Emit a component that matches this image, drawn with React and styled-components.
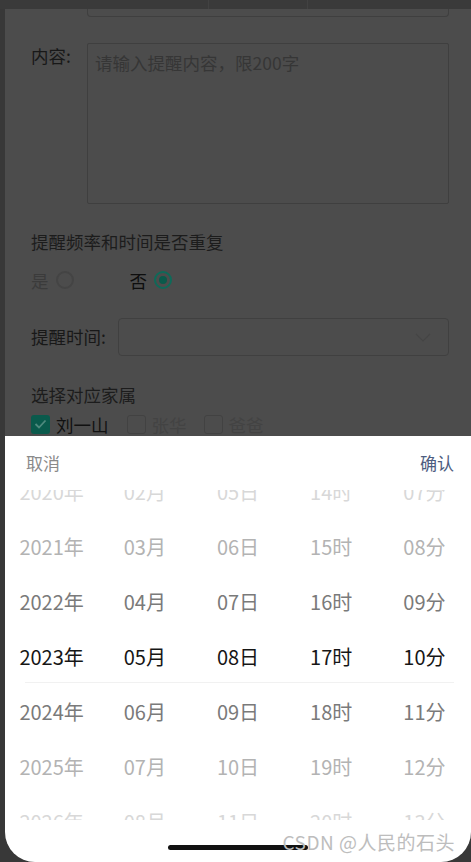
import React from "react";
import styled, { createGlobalStyle } from "styled-components";

const Global = createGlobalStyle`
  html, body { margin: 0; padding: 0; background: #353535; }
  body { font-family: "Noto Sans CJK SC", "Noto Sans", sans-serif; }
  * { box-sizing: border-box; }
`;

const Frame = styled.div`
  width: 471px;
  height: 862px;
  display: flex;
  flex-direction: column;
  background: #383838;
  overflow: hidden;
`;

const StatusStrip = styled.div`
  height: 9px;
  flex: none;
  display: flex;
  background: #3a3a3a;
`;

const StripCell = styled.div`
  width: ${(p) => (p.$w ? `${p.$w}px` : "auto")};
  flex: ${(p) => (p.$w ? "none" : 1)};
  border-left: ${(p) => (p.$edge ? "1px solid #424242" : "none")};
`;

const Screen = styled.div`
  position: relative;
  flex: 1;
  margin-left: 5px;
  background: #4c4c4c;
  border-bottom-left-radius: 30px;
  border-bottom-right-radius: 30px;
  overflow: hidden;
`;

const Form = styled.div`
  display: flex;
  flex-direction: column;
  padding: 0 22px 0 26px;
  color: #1e1e1e;
  font-size: 17.5px;
`;

const InputStub = styled.div`
  margin-left: 56px;
  height: 8px;
  border: 1px solid #3f3f3f;
  border-top: none;
  border-radius: 0 0 4px 4px;
`;

const FieldRow = styled.div`
  display: flex;
  align-items: ${(p) => (p.$center ? "center" : "flex-start")};
  margin-top: ${(p) => p.$mt}px;
`;

const Label = styled.div`
  width: ${(p) => p.$w}px;
  flex: none;
  line-height: ${(p) => p.$lh}px;
  color: #181818;
  white-space: nowrap;
`;

const TextBox = styled.div`
  flex: 1;
  height: 161px;
  border: 1px solid #3f3f3f;
  border-radius: 2px;
  padding: 6px 7px;
  line-height: 26px;
  color: #363636;
`;

const SectionTitle = styled.div`
  margin-top: ${(p) => p.$mt}px;
  line-height: 24px;
  color: #1c1c1c;
`;

const ChoiceRow = styled.div`
  display: flex;
  align-items: center;
  height: 24px;
  margin-top: ${(p) => p.$mt}px;
`;

const RadioItem = styled.div`
  display: flex;
  align-items: center;
  gap: 7px;
  margin-right: ${(p) => p.$mr || 0}px;
  color: ${(p) => (p.$on ? "#0e0e0e" : "#3b3b3b")};
`;

const RadioDot = styled.span`
  width: 18px;
  height: 18px;
  border-radius: 50%;
  border: 2px solid ${(p) => (p.$on ? "#0e6a59" : "#444444")};
  display: flex;
  align-items: center;
  justify-content: center;
  &::after {
    content: "";
    width: 8px;
    height: 8px;
    border-radius: 50%;
    background: ${(p) => (p.$on ? "#0a5a4b" : "transparent")};
  }
`;

const SelectBox = styled.div`
  flex: 1;
  height: 38px;
  border: 1px solid #404040;
  border-radius: 4px;
  display: flex;
  align-items: center;
  justify-content: flex-end;
  padding-right: 17px;
`;

const CheckItem = styled.div`
  display: flex;
  align-items: center;
  gap: 6px;
  margin-left: ${(p) => p.$ml || 0}px;
  color: ${(p) => (p.$on ? "#111111" : "#434343")};
`;

const CheckBox = styled.span`
  width: 19px;
  height: 19px;
  border-radius: 3px;
  display: flex;
  align-items: center;
  justify-content: center;
  background: ${(p) => (p.$on ? "#0a5a4c" : "transparent")};
  border: ${(p) => (p.$on ? "none" : "1px solid #424242")};
`;

/* bottom date-time picker popup */
const Sheet = styled.div`
  position: absolute;
  left: 0;
  right: 0;
  top: 427px;
  bottom: 0;
  background: #ffffff;
  display: flex;
  flex-direction: column;
`;

const SheetHeader = styled.div`
  height: 54px;
  flex: none;
  display: flex;
  justify-content: space-between;
  align-items: center;
  padding: 0 17px 0 21px;
  font-size: 17px;
  line-height: 24px;
`;

const HeaderBtn = styled.span`
  color: ${(p) => (p.$primary ? "#4e5d80" : "#8a8a8a")};
`;

const WheelView = styled.div`
  position: relative;
  height: 330px;
  flex: none;
  overflow: hidden;
  display: grid;
  grid-template-columns: repeat(5, 1fr);
`;

const Column = styled.div`
  margin-top: -26.5px;
  display: flex;
  flex-direction: column;
`;

const shades = ["#161616", "#7a7a7a", "#b3b3b3", "#d8d8d8"];

const Cell = styled.div`
  height: 55px;
  flex: none;
  display: flex;
  align-items: center;
  justify-content: center;
  font-size: 20px;
  color: ${(p) => shades[p.$d]};
  white-space: nowrap;
`;

const PickLine = styled.div`
  position: absolute;
  left: 20px;
  right: 17px;
  top: 192px;
  height: 1px;
  background: #f1f1f1;
`;

const SheetFoot = styled.div`
  flex: 1;
  display: flex;
  justify-content: center;
  padding-top: 25px;
`;

const HomeBar = styled.div`
  width: 140px;
  height: 5px;
  border-radius: 3px;
  background: #111111;
`;

const Watermark = styled.div`
  position: absolute;
  right: 16px;
  bottom: 10px;
  font-size: 19px;
  line-height: 20px;
  letter-spacing: 0.5px;
  color: #bdbdbd;
  white-space: nowrap;
`;

const pad = (n) => String(n).padStart(2, "0");

const columns = [
  { start: 2020, unit: "年", fmt: (n) => String(n) },
  { start: 2, unit: "月", fmt: pad },
  { start: 5, unit: "日", fmt: pad },
  { start: 14, unit: "时", fmt: pad },
  { start: 7, unit: "分", fmt: pad },
];

const Chevron = () => (
  <svg width="16" height="9" viewBox="0 0 16 9" fill="none">
    <path d="M1 1l7 7 7-7" stroke="#454545" strokeWidth="1.2" />
  </svg>
);

const Tick = () => (
  <svg width="13" height="10" viewBox="0 0 13 10" fill="none">
    <path d="M1.5 5l3.5 3.5 6.5-7" stroke="#4f8a7e" strokeWidth="1.8" />
  </svg>
);

export default function App() {
  return (
    <>
      <Global />
      <Frame>
        <StatusStrip>
          <StripCell $w={208} />
          <StripCell $w={99} $edge />
          <StripCell $edge />
        </StatusStrip>
        <Screen>
          <Form>
            <InputStub />
            <FieldRow $mt={26}>
              <Label $w={56} $lh={26}>内容:</Label>
              <TextBox>请输入提醒内容，限200字</TextBox>
            </FieldRow>
            <SectionTitle $mt={26}>提醒频率和时间是否重复</SectionTitle>
            <ChoiceRow $mt={14}>
              <RadioItem $mr={56}>
                是<RadioDot />
              </RadioItem>
              <RadioItem $on>
                否<RadioDot $on />
              </RadioItem>
            </ChoiceRow>
            <FieldRow $mt={26} $center>
              <Label $w={87} $lh={38}>提醒时间:</Label>
              <SelectBox>
                <Chevron />
              </SelectBox>
            </FieldRow>
            <SectionTitle $mt={27}>选择对应家属</SectionTitle>
            <ChoiceRow $mt={5}>
              <CheckItem $on>
                <CheckBox $on>
                  <Tick />
                </CheckBox>
                刘一山
              </CheckItem>
              <CheckItem $ml={18}>
                <CheckBox />
                张华
              </CheckItem>
              <CheckItem $ml={17}>
                <CheckBox />
                爸爸
              </CheckItem>
            </ChoiceRow>
          </Form>

          <Sheet>
            <SheetHeader>
              <HeaderBtn>取消</HeaderBtn>
              <HeaderBtn $primary>确认</HeaderBtn>
            </SheetHeader>
            <WheelView>
              {columns.map((c, ci) => (
                <Column key={ci}>
                  {Array.from({ length: 7 }, (_, i) => (
                    <Cell key={i} $d={Math.abs(i - 3)}>
                      {c.fmt(c.start + i)}
                      {c.unit}
                    </Cell>
                  ))}
                </Column>
              ))}
              <PickLine />
            </WheelView>
            <SheetFoot>
              <HomeBar />
            </SheetFoot>
          </Sheet>
          <Watermark>CSDN @人民的石头</Watermark>
        </Screen>
      </Frame>
    </>
  );
}
